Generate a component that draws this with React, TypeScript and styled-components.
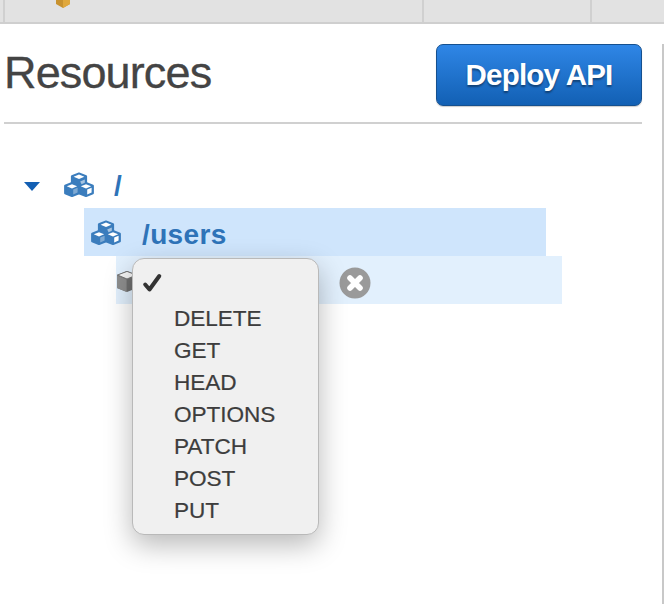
import React from "react";
import styled, { createGlobalStyle } from "styled-components";

const Global = createGlobalStyle`
  html, body { margin: 0; padding: 0; background: #fff; }
  body { font-family: "Liberation Sans", Arial, sans-serif; }
  #root { width: 664px; height: 604px; overflow: hidden; }
`;

const Page = styled.div`
  width: 664px;
  height: 604px;
  display: flex;
  flex-direction: column;
  background: #fff;
`;

const TopBar = styled.div`
  height: 22px;
  flex: none;
  background: #e2e2e2;
  border-bottom: 2px solid #cfcfcf;
  display: grid;
  grid-template-columns: 5px 419px 168px 1fr;
`;

const TopCell = styled.div`
  border-right: 2px solid #d0d0d0;
  box-sizing: border-box;
  display: flex;
  justify-content: flex-start;
  padding-left: 48px;
  &:last-child { border-right: none; }
  &:first-child { padding-left: 0; }
`;

const Workspace = styled.div`
  flex: 1;
  display: flex;
  min-height: 0;
`;

const Main = styled.div`
  flex: 1;
  padding: 20px 20px 0 4px;
  display: flex;
  flex-direction: column;
`;

const Rule = styled.div`
  flex: none;
  width: 2px;
  margin-top: 20px;
  background: #c8c8c8;
`;

const Header = styled.div`
  display: flex;
  justify-content: space-between;
  align-items: flex-start;
  height: 78px;
  border-bottom: 2px solid #d0d0d0;
`;

const Title = styled.h1`
  margin: 0;
  padding-top: 2px;
  font-size: 45px;
  line-height: 54px;
  font-weight: 400;
  color: #444;
  letter-spacing: -0.87px;
  -webkit-text-stroke: 0.3px #444;
`;

const DeployButton = styled.button`
  width: 206px;
  height: 62px;
  border-radius: 7px;
  border: 1px solid #15508f;
  background: linear-gradient(#2f86e6, #1260b4);
  color: #fff;
  font-family: inherit;
  font-size: 29.5px;
  font-weight: 700;
  letter-spacing: -0.75px;
  text-shadow: 0 2px 2px rgba(0, 0, 0, 0.4);
  box-shadow: 0 1px 1px rgba(0, 0, 0, 0.2);
  padding: 0;
`;

const Tree = styled.div`
  margin-top: 36px;
  display: flex;
  flex-direction: column;
  position: relative;
`;

const RootRow = styled.div`
  display: flex;
  align-items: center;
  height: 44px;
  padding: 4px 0 0 20px;
`;

const RootIcon = styled.span`
  display: flex;
  margin: -3px 0 0 1px;
`;

const Caret = styled.span`
  width: 0;
  height: 0;
  border-left: 8.5px solid transparent;
  border-right: 8.5px solid transparent;
  border-top: 9px solid #135fb3;
  margin-right: 23px;
`;

const PathName = styled.span<{ $gap: number; $drop: number }>`
  margin-left: ${(p) => p.$gap}px;
  padding-top: ${(p) => p.$drop}px;
  font-size: 28px;
  font-weight: 700;
  letter-spacing: 0.35px;
  color: #2e73b8;
`;

const ResourceRow = styled.div`
  display: flex;
  align-items: center;
  height: 48px;
  width: 462px;
  margin-left: 80px;
  padding-left: 7px;
  box-sizing: border-box;
  background: #cfe5fc;
`;

const MethodRow = styled.div`
  display: flex;
  align-items: center;
  height: 48px;
  width: 446px;
  margin-left: 112px;
  background: #e2f0fd;
  box-sizing: border-box;
  padding: 6px 0 0 223px;
`;

const CubeWrap = styled.span`
  position: absolute;
  left: 112px;
  top: 110px;
`;

const Menu = styled.ul`
  position: absolute;
  left: 128px;
  top: 98px;
  width: 187px;
  height: 277px;
  box-sizing: border-box;
  margin: 0;
  padding: 12px 0 0;
  list-style: none;
  background: #f0f0f0;
  border: 1px solid #b9b9b9;
  border-radius: 12px;
  box-shadow: 0 10px 28px rgba(0, 0, 0, 0.28);
`;

const MenuItem = styled.li`
  display: flex;
  align-items: center;
  height: 32px;
  padding-left: 41px;
  font-size: 22.6px;
  letter-spacing: -0.05px;
  color: #3d3d3d;
  -webkit-text-stroke: 0.2px #3d3d3d;
`;

const Check = styled.span`
  position: absolute;
  left: 9px;
  top: 14px;
  display: flex;
`;

const CloseIcon = styled.span`
  display: flex;
`;

const Cubes = () => (
  <svg width="30" height="25" viewBox="0 0 30 25">
    <g strokeLinejoin="round" stroke="#3b7dbd" strokeWidth="2.2">
      <path d="M15 1.5l7 2.8v7.4L15 15 8 11.7V4.3z" fill="#3b7dbd" />
      <path d="M8 11l7 2.8v7.4L8 24l-6.8-2.8v-7.4z" fill="#3b7dbd" />
      <path d="M22 11l6.8 2.8v7.4L22 24l-7-2.8v-7.4z" fill="#3b7dbd" />
    </g>
    <g fill="#fff">
      <path d="M15 2.6l5.4 2.2L15 7 9.6 4.8z" />
      <path d="M8 12.2l5.2 2L8 16.4l-5.2-2.2z" />
      <path d="M22 12.2l5.2 2-5.2 2.2-5.2-2.2z" />
      <path d="M23.2 17.6l4.4-1.9v4.7l-4.4 2z" />
      <path d="M16.2 9.6l4.6-2v3.2l-3.2 1.4z" opacity="0.55" />
      <path d="M9.2 17.6l4.4-1.9v4.7l-4.4 2z" opacity="0.35" />
    </g>
  </svg>
);

const GreyCube = () => (
  <svg width="22" height="23" viewBox="0 0 22 23">
    <path d="M11 1l10 4v13l-10 4-10-4V5z" fill="#6f6f6f" />
    <path d="M1.5 5l9.5-3.6L20.5 5 11 9z" fill="#f5f5f5" stroke="#777" strokeWidth="1" />
    <path d="M1 5.4l9.6 4V22L1 18z" fill="#8e8e8e" />
  </svg>
);

const CheckMark = () => (
  <svg width="22" height="20" viewBox="0 0 22 20">
    <path d="M3.2 11.5l4.3 5 9.8-13.5" fill="none" stroke="#333" strokeWidth="4" strokeLinecap="round" strokeLinejoin="round" />
  </svg>
);

const CloseCircle = () => (
  <svg width="32" height="32" viewBox="0 0 32 32">
    <circle cx="16" cy="16" r="15.5" fill="#9a9a9a" />
    <path d="M11 11l10 10M21 11L11 21" stroke="#fff" strokeWidth="5.6" strokeLinecap="round" />
  </svg>
);

const Logo = () => (
  <svg width="20" height="8" viewBox="0 0 20 8">
    <path d="M3 0h14v4l-7 4-7-4z" fill="#c8922f" />
    <path d="M10 0h7v4l-7 4z" fill="#e0a83c" />
  </svg>
);

const methods = ["DELETE", "GET", "HEAD", "OPTIONS", "PATCH", "POST", "PUT"];

export default function App() {
  return (
    <Page>
      <Global />
      <TopBar>
        <TopCell />
        <TopCell>
          <Logo />
        </TopCell>
        <TopCell />
        <TopCell />
      </TopBar>
      <Workspace>
        <Main>
          <Header>
            <Title>Resources</Title>
            <DeployButton>Deploy API</DeployButton>
          </Header>
          <Tree>
            <RootRow>
              <Caret />
              <RootIcon>
                <Cubes />
              </RootIcon>
              <PathName $gap={20} $drop={0}>/</PathName>
            </RootRow>
            <ResourceRow>
              <Cubes />
              <PathName $gap={21} $drop={6}>/users</PathName>
            </ResourceRow>
            <MethodRow>
              <CloseIcon>
                <CloseCircle />
              </CloseIcon>
            </MethodRow>
            <CubeWrap>
              <GreyCube />
            </CubeWrap>
            <Menu>
              <Check>
                <CheckMark />
              </Check>
              <MenuItem />
              {methods.map((m) => (
                <MenuItem key={m}>{m}</MenuItem>
              ))}
            </Menu>
          </Tree>
        </Main>
        <Rule />
      </Workspace>
    </Page>
  );
}
